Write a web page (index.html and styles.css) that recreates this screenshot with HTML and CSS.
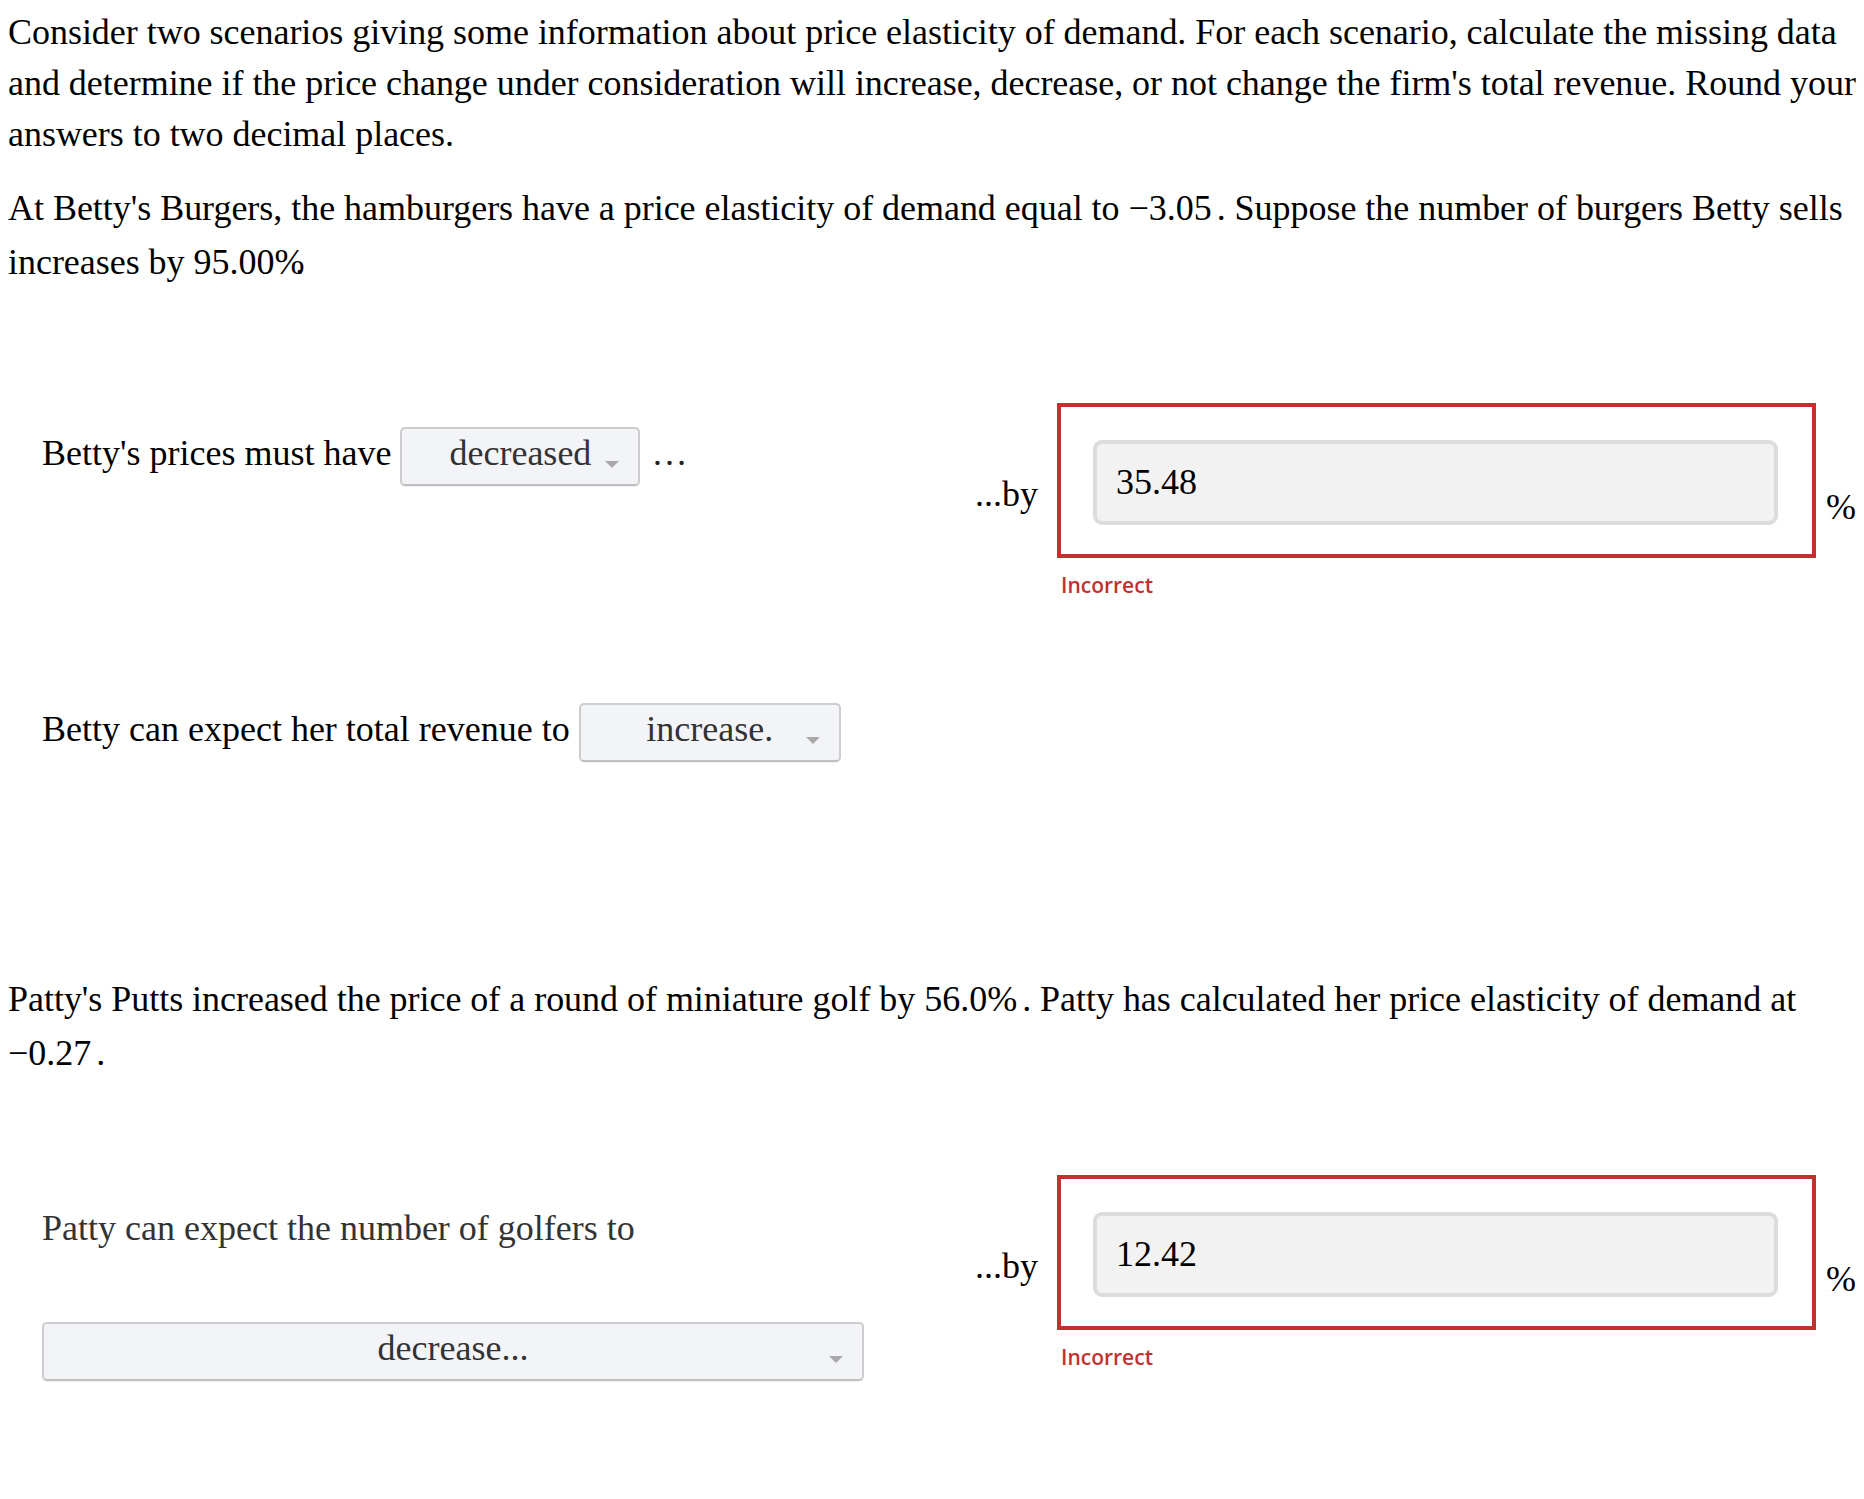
FILE: index.html
```html
<!DOCTYPE html>
<html lang="en">
<head>
<meta charset="utf-8">
<title>Price elasticity of demand</title>
<link rel="stylesheet" href="styles.css">
</head>
<body>
<main class="page">
  <p class="intro">Consider two scenarios giving some information about price elasticity of demand. For each scenario, calculate the missing data<br>and determine if the price change under consideration will increase, decrease, or not change the firm's total revenue. Round your<br>answers to two decimal places.</p>
  <p class="scenario">At Betty's Burgers, the hamburgers have a price elasticity of demand equal to <span class="math">−3.05</span>. Suppose the number of burgers Betty sells<br>increases by 95.00%<span class="tuck">.</span></p>

  <section class="qrow qrow-first">
    <div class="qleft qleft-inline">
      <span class="label">Betty's prices must have</span> <span class="select sel-decreased">decreased<i class="caret"></i></span> <span class="ellipsis">…</span>
    </div>
    <div class="qright">
      <span class="by">...by</span>
      <div class="answer">
        <div class="answer-box"><div class="field">35.48</div></div>
        <div class="feedback">Incorrect</div>
      </div>
      <span class="unit">%</span>
    </div>
  </section>

  <section class="qrow-single">
    <span class="label">Betty can expect her total revenue to</span> <span class="select sel-increase">increase.<i class="caret"></i></span>
  </section>

  <p class="scenario scenario-patty">Patty's Putts increased the price of a round of miniature golf by <span class="math">56.0%</span>. Patty has calculated her price elasticity of demand at<br><span class="math">−0.27</span>.</p>

  <section class="qrow qrow-third">
    <div class="qleft qleft-stack">
      <div class="label label-muted">Patty can expect the number of golfers to</div>
      <div class="select select-block">decrease...<i class="caret"></i></div>
    </div>
    <div class="qright">
      <span class="by">...by</span>
      <div class="answer">
        <div class="answer-box"><div class="field">12.42</div></div>
        <div class="feedback">Incorrect</div>
      </div>
      <span class="unit">%</span>
    </div>
  </section>
</main>
</body>
</html>
```

FILE: styles.css
```css
html, body {
  margin: 0;
  padding: 0;
  background: #ffffff;
}

body {
  font-family: "Liberation Serif", "Times New Roman", serif;
  font-size: 36px;
  color: #000000;
}

.page {
  padding: 7px 8px 80px;
}

p {
  margin: 0;
  white-space: nowrap;
}

.intro {
  line-height: 51px;
}

.intro,
.scenario {
  letter-spacing: -0.03px;
}

.scenario {
  line-height: 53.5px;
  margin-top: 22px;
}

.scenario-patty {
  margin-top: 211px;
}

.math {
  margin-right: 5px;
}

.tuck {
  margin-left: -9px;
}

/* question rows */
.qrow {
  display: grid;
  grid-template-columns: 933px auto;
  align-items: start;
  padding-left: 34px;
}

.qrow-first {
  margin-top: 114px;
}

.qrow-third {
  margin-top: 95px;
}

.qleft-inline {
  padding-top: 24px;
  line-height: 51px;
}

.qleft-stack {
  padding-top: 28px;
  line-height: 51px;
}

.qrow-single {
  margin-top: 104px;
  padding-left: 34px;
  line-height: 51px;
}

.label-muted {
  color: #333333;
}

/* dropdowns */
.select {
  position: relative;
  display: inline-block;
  box-sizing: border-box;
  height: 59px;
  padding-top: 4.5px;
  line-height: 39px;
  text-align: center;
  color: #333333;
  background: #f3f4f8;
  border: 2px solid #cdcdcd;
  border-bottom-color: #bfbfbf;
  border-radius: 5px;
  box-shadow: 0 1px 1px rgba(0, 0, 0, 0.06);
  vertical-align: baseline;
}

.sel-decreased {
  width: 240px;
  margin-left: 0;
}

.sel-increase {
  width: 262px;
  margin-left: 0;
}

.select-block {
  display: block;
  width: 822px;
  margin-top: 68px;
}

.caret {
  position: absolute;
  top: 32px;
  right: 19px;
  width: 0;
  height: 0;
  border-left: 7.5px solid transparent;
  border-right: 7.5px solid transparent;
  border-top: 7px solid #a9a9a9;
}

.ellipsis {
  margin-left: 2px;
  color: #222222;
}

/* answer column */
.qright {
  display: flex;
  align-items: flex-start;
}

.by {
  margin-top: 72px;
  margin-right: 19px;
  line-height: 39px;
}

.answer {
  display: flex;
  flex-direction: column;
}

.answer-box {
  box-sizing: border-box;
  width: 759px;
  border: 4px solid #c0312f;
  padding: 33px 34px 29px 32px;
}

.field {
  box-sizing: border-box;
  height: 85px;
  padding-left: 19px;
  border: 4px solid #dcdcdc;
  border-radius: 9px;
  background: #f2f2f2;
  font-size: 36px;
  line-height: 77px;
  color: #000000;
}

.feedback {
  margin-top: 13px;
  padding-left: 4px;
  font-family: "Open Sans", "Liberation Sans", sans-serif;
  font-weight: 600;
  font-size: 21px;
  line-height: 28px;
  color: #c0312f;
}

.unit {
  margin-left: 10px;
  margin-top: 85px;
  line-height: 39px;
}
```
